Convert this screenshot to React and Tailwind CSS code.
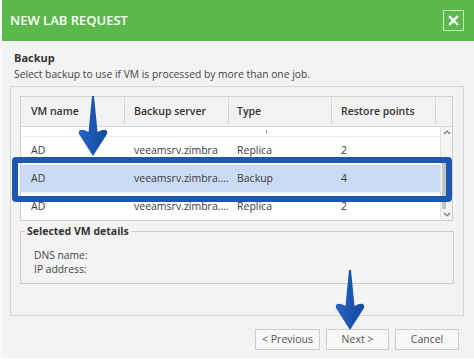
import React from "react";

function Arrow({ className }) {
  return (
    <svg className={className} viewBox="0 0 32 62" width="32" height="62">
      <defs>
        <linearGradient id="ag" x1="0" x2="1" y1="0" y2="0">
          <stop offset="0" stopColor="#2a66c4" />
          <stop offset="0.5" stopColor="#1a55b0" />
          <stop offset="1" stopColor="#174c9e" />
        </linearGradient>
      </defs>
      <path
        d="M15 0 L17 0 L20.5 36 Q26 33 29 34 Q31 35.5 30 38 L16 60 L2 38 Q1 35.5 3 34 Q6 33 11.5 36 Z"
        fill="url(#ag)"
      />
    </svg>
  );
}

const rows = [
  ["AD", "veeamsrv.zimbra", "Replica", "2", false],
  ["AD", "veeamsrv.zimbra....", "Backup", "4", true],
  ["AD", "veeamsrv.zimbra....", "Replica", "2", false],
];

export default function App() {
  return (
    <div
      className="relative w-[474px] h-[363px] bg-white overflow-hidden text-[#3a3a3a]"
      style={{ fontFamily: '"Open Sans", "Noto Sans", sans-serif' }}
    >
      <div className="h-[358px] bg-[#f3f3f3] border-l-[2px] border-[#f8f8f8] flex flex-col">
        {/* Title bar */}
        <div className="h-[41px] bg-[#5bb84b] flex items-center justify-between pl-[8px] pr-[10px] shrink-0">
          <span className="text-white text-[13px] font-semibold">NEW LAB REQUEST</span>
          <div className="w-[21px] h-[21px] border-[1.5px] border-[#c9ebc3] flex items-center justify-center">
            <svg width="11" height="11" viewBox="0 0 11 11">
              <path d="M2 2 L9 9 M9 2 L2 9" stroke="white" strokeWidth="2.4" strokeLinecap="square" />
            </svg>
          </div>
        </div>

        {/* Body */}
        <div className="pl-[12px] pt-[9px]">
          <div className="text-[11px] font-bold leading-[16px] text-[#333]">Backup</div>
          <div className="text-[10.3px] leading-[16px] text-[#444]">
            Select backup to use if VM is processed by more than one job.
          </div>
        </div>

        <div className="ml-[8px] mt-[4px] w-[454px] h-[230px] border border-[#d4d4d4] pt-[9px] pl-[9px] flex flex-col">
          {/* Grid */}
          <div className="w-[433px] h-[125px] border border-[#d0d0d0] bg-white flex flex-col">
            <div className="h-[30px] bg-[#f2f2f2] border-b border-[#d6d6d6] flex text-[10.5px] font-semibold text-[#333] shrink-0">
              <div className="w-[104px] border-r border-[#d6d6d6] pl-[10px] flex items-center">VM name</div>
              <div className="w-[104px] border-r border-[#d6d6d6] pl-[9px] flex items-center">Backup server</div>
              <div className="w-[103px] border-r border-[#d6d6d6] pl-[8px] flex items-center">Type</div>
              <div className="w-[104px] border-r border-[#d6d6d6] pl-[9px] flex items-center">Restore points</div>
              <div className="flex-1"></div>
            </div>
            <div className="flex-1 flex overflow-hidden">
              <div className="flex-1 overflow-hidden">
                <div className="h-[10px] border-b border-[#eeeeee] relative">
                  <div className="absolute left-[245px] top-[3px] w-[1px] h-[3px] bg-[#999]"></div>
                </div>
                {rows.map((r, i) => (
                  <div
                    key={i}
                    className={
                      "h-[28px] flex items-center text-[10.5px] border-b border-[#eeeeee] " +
                      (r[4] ? "bg-[#cadcf5]" : "bg-white")
                    }
                  >
                    <div className="w-[104px] pl-[10px]">{r[0]}</div>
                    <div className="w-[104px] pl-[9px] whitespace-nowrap overflow-hidden">{r[1]}</div>
                    <div className="w-[103px] pl-[8px]">{r[2]}</div>
                    <div className="w-[100px] pl-[9px]">{r[3]}</div>
                  </div>
                ))}
              </div>
              <div className="w-[12px] bg-[#f4f4f4] border-l border-[#e4e4e4] flex flex-col items-center justify-between py-[2px] relative">
                <svg width="8" height="6" viewBox="0 0 8 6">
                  <path d="M1 5 L4 2 L7 5" stroke="#777" strokeWidth="1.2" fill="none" />
                </svg>
                <div className="absolute left-[1px] top-[32px] w-[4px] h-[50px] bg-[#c4c4c4]"></div>
                <svg width="8" height="6" viewBox="0 0 8 6">
                  <path d="M1 1 L4 4 L7 1" stroke="#777" strokeWidth="1.2" fill="none" />
                </svg>
              </div>
            </div>
          </div>

          {/* Group box */}
          <div className="relative mt-[10px] w-[434px] h-[53px] border border-[#cfcfcf] pt-[16px] pl-[13px]">
            <div className="absolute left-[4px] top-[-9px] px-[2px] bg-[#f3f3f3] text-[10.5px] font-bold leading-[16px] text-[#333]">
              Selected VM details
            </div>
            <div className="text-[10.3px] leading-[14px] text-[#444]">DNS name:</div>
            <div className="text-[10.3px] leading-[14px] text-[#444]">IP address:</div>
          </div>
        </div>

        {/* Buttons */}
        <div className="flex justify-end gap-[6px] pr-[15px] mt-[13px]">
          <button className="w-[65px] h-[21px] border border-[#cfcfcf] bg-[#f7f7f7] text-[10.5px] text-[#555] flex items-center justify-center">
            &lt; Previous
          </button>
          <button className="w-[63px] h-[21px] border border-[#cfcfcf] bg-[#f7f7f7] text-[10.5px] text-[#555] flex items-center justify-center">
            Next &gt;
          </button>
          <button className="w-[64px] h-[21px] border border-[#cfcfcf] bg-[#f7f7f7] text-[10.5px] text-[#555] flex items-center justify-center">
            Cancel
          </button>
        </div>
      </div>

      {/* Overlays */}
      <div className="absolute left-[12px] top-[157px] w-[440px] h-[45px] border-[6px] border-[#1c57b2] rounded-[4px]"></div>
      <Arrow className="absolute left-[77px] top-[96px]" />
      <Arrow className="absolute left-[334px] top-[270px]" />
    </div>
  );
}
